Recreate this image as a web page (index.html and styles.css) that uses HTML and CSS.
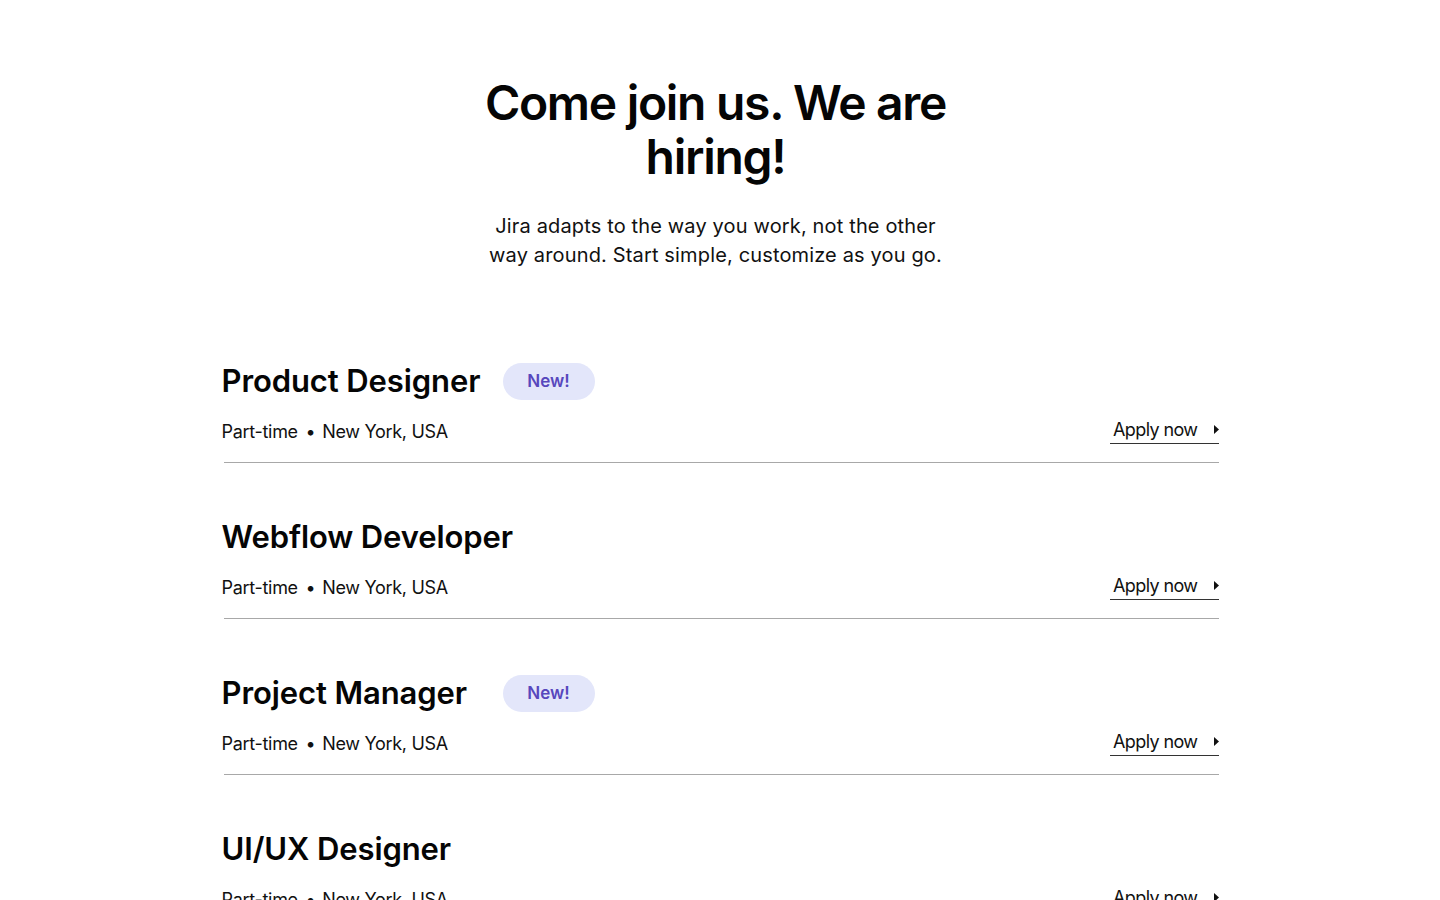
FILE: index.html
```html
<!DOCTYPE html>
<html lang="en">
<head>
<meta charset="utf-8">
<title>Careers</title>
<link rel="stylesheet" href="styles.css">
</head>
<body>
<main class="page">
  <header class="hero">
    <h1 class="hero-title">Come join us. We are hiring!</h1>
    <p class="hero-text">Jira adapts to the way you work, not the other way around. Start simple, customize as you go.</p>
  </header>
  <section class="jobs">
    <article class="job">
      <div class="job-head">
        <h2 class="job-title">Product Designer</h2>
        <span class="badge">New!</span>
      </div>
      <div class="job-foot">
        <p class="job-meta">Part-time <span class="dot">•</span> New York, USA</p>
        <a class="apply" href="#">Apply now <svg class="caret" width="5" height="9" viewBox="0 0 5 9"><path d="M0 0 L5 4.5 L0 9 Z" fill="#111"/></svg></a>
      </div>
    </article>
    <article class="job">
      <div class="job-head">
        <h2 class="job-title">Webflow Developer</h2>
      </div>
      <div class="job-foot">
        <p class="job-meta">Part-time <span class="dot">•</span> New York, USA</p>
        <a class="apply" href="#">Apply now <svg class="caret" width="5" height="9" viewBox="0 0 5 9"><path d="M0 0 L5 4.5 L0 9 Z" fill="#111"/></svg></a>
      </div>
    </article>
    <article class="job">
      <div class="job-head">
        <h2 class="job-title">Project Manager</h2>
        <span class="badge">New!</span>
      </div>
      <div class="job-foot">
        <p class="job-meta">Part-time <span class="dot">•</span> New York, USA</p>
        <a class="apply" href="#">Apply now <svg class="caret" width="5" height="9" viewBox="0 0 5 9"><path d="M0 0 L5 4.5 L0 9 Z" fill="#111"/></svg></a>
      </div>
    </article>
    <article class="job">
      <div class="job-head">
        <h2 class="job-title">UI/UX Designer</h2>
      </div>
      <div class="job-foot">
        <p class="job-meta">Part-time <span class="dot">•</span> New York, USA</p>
        <a class="apply" href="#">Apply now <svg class="caret" width="5" height="9" viewBox="0 0 5 9"><path d="M0 0 L5 4.5 L0 9 Z" fill="#111"/></svg></a>
      </div>
    </article>
  </section>
</main>
</body>
</html>
```
FILE: styles.css
```css
html, body {
  margin: 0;
  padding: 0;
  background: #fff;
  color: #0a0a0a;
  font-family: Inter, "Noto Sans", sans-serif;
}

.page {
  width: 997px;
  margin: 0 auto;
  padding-top: 76px;
}

.hero {
  display: flex;
  flex-direction: column;
  align-items: center;
  text-align: center;
  padding-right: 9px;
}

.hero-title {
  margin: 0;
  width: 500px;
  font-size: 48px;
  line-height: 54px;
  font-weight: 600;
  letter-spacing: -1.3px;
  color: #050505;
}

.hero-text {
  margin: 28px 0 0;
  width: 462px;
  font-size: 20px;
  line-height: 29px;
  font-weight: 400;
  letter-spacing: 0.15px;
  color: #111;
}

.jobs {
  margin-top: 91px;
  display: flex;
  flex-direction: column;
  gap: 54px;
}

.job-head {
  display: flex;
  align-items: center;
  gap: 22px;
  height: 40px;
}

.job-title {
  margin: 0;
  min-width: 259px;
  font-size: 31px;
  line-height: 40px;
  font-weight: 600;
  letter-spacing: -0.1px;
  color: #050505;
}

.badge {
  display: inline-flex;
  align-items: center;
  justify-content: center;
  width: 92px;
  height: 37px;
  border-radius: 19px;
  background: #e3e6fa;
  color: #5747bd;
  font-size: 17px;
  font-weight: 600;
}

.job-foot {
  display: flex;
  justify-content: space-between;
  align-items: center;
  margin-top: 19px;
  padding-bottom: 18px;
  border-bottom: 1px solid #a8a8a8;
  margin-left: 2px;
}

.job-meta {
  margin: 0 0 0 -2px;
  font-size: 18px;
  line-height: 24px;
  letter-spacing: -0.3px;
  color: #111;
}

.dot {
  margin: 0 2px 0 3px;
}

.apply {
  display: inline-flex;
  align-items: center;
  gap: 16px;
  padding: 0 0 1px 3px;
  margin-top: -3px;
  border-bottom: 1px solid #333;
  font-size: 18px;
  line-height: 24px;
  letter-spacing: -0.6px;
  color: #111;
  text-decoration: none;
}

.caret {
  display: block;
}
```
